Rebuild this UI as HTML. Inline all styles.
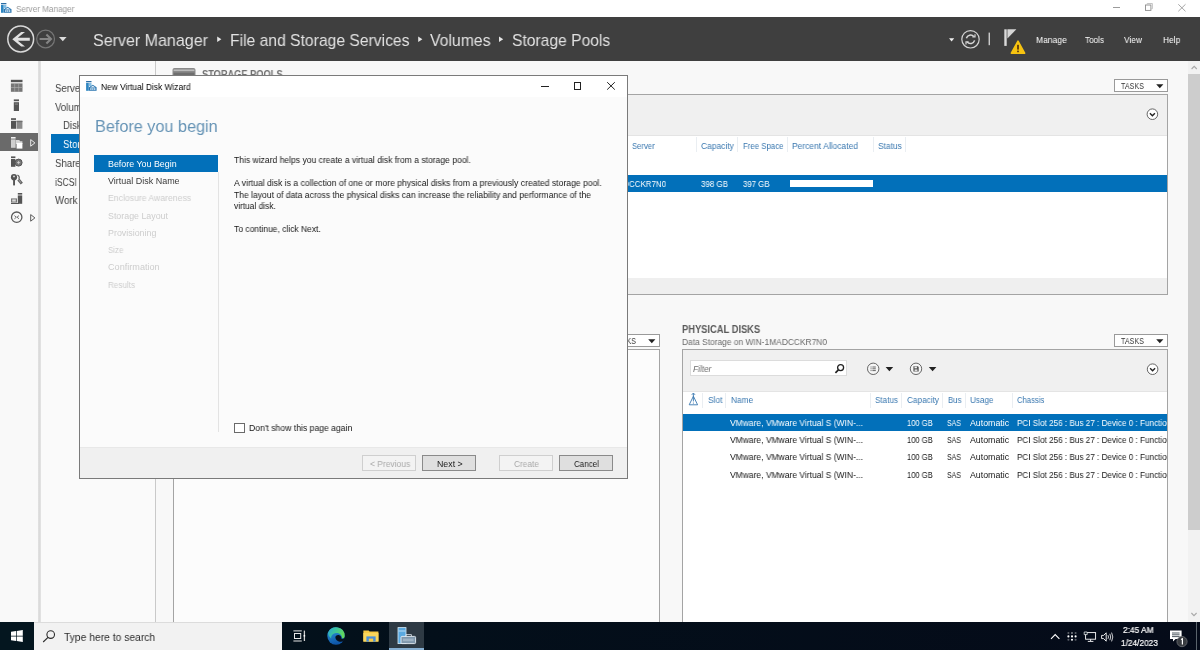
<!DOCTYPE html>
<html><head><meta charset="utf-8"><title>Server Manager</title>
<style>
html,body{margin:0;padding:0}
body{width:1200px;height:650px;position:relative;overflow:hidden;background:#fff;font-family:"Liberation Sans",sans-serif}
.a{position:absolute}
.t{position:absolute;white-space:pre;transform-origin:0 50%;will-change:transform}
svg{position:absolute;overflow:visible}
.tile{position:absolute;border:1px solid #a4a4a4;box-sizing:border-box;background:#fff}
.btn{position:absolute;box-sizing:border-box;border:1px solid #8a8a8a;background:#dfdfdf}
.btn.dis{border-color:#cfcfcf;background:#f3f3f3}
.tasks{position:absolute;box-sizing:border-box;border:1px solid #9a9a9a;background:#fff}
.sep{position:absolute;width:1px;background:#eaeef2}
</style></head><body>

<!-- ===== window title bar ===== -->
<div class="a" style="left:0;top:0;width:1200px;height:17px;background:#fff"></div>
<svg style="left:1.2px;top:3.1px" width="10.6" height="9.9" viewBox="0 0 10.6 9.9">
 <rect x="0" y="0" width="5.4" height="1.25" fill="#2d6ea5"/>
 <rect x="0" y="1.9" width="2.7" height="7.9" fill="#2e86c1"/>
 <rect x="2.7" y="1.9" width="2.7" height="3.2" fill="#86bfe3"/>
 <path d="M2.9 9.8V6.3L6.7 3.7L10.5 6.3V9.8Z" fill="#2b76b1"/>
 <path d="M4 6.6L6.7 4.8L9.4 6.6Z" fill="#e8f2fa"/>
 <rect x="4.1" y="7.2" width="5.2" height="1.7" fill="#cfe3f2"/>
 <rect x="5.2" y="7.5" width="1" height="1.1" fill="#2b76b1"/><rect x="7" y="7.5" width="1" height="1.1" fill="#2b76b1"/>
</svg>
<!-- window controls (inactive grey) -->
<div class="a" style="left:1113px;top:7px;width:7px;height:1px;background:#9b9b9b"></div>
<svg style="left:1144.6px;top:3.4px" width="8" height="8" viewBox="0 0 8 8" fill="none" stroke-width="0.9">
 <rect x="0.5" y="2" width="5.4" height="5.4" stroke="#8c8c8c"/><path d="M2.2 1.6V0.5H7.4V5.7H6.3" stroke="#bdbdbd"/>
</svg>
<svg style="left:1178px;top:4px" width="8" height="8" viewBox="0 0 8 8" stroke="#9b9b9b" stroke-width="0.9"><path d="M0.3 0.3L7.5 7.3M7.5 0.3L0.3 7.3"/></svg>

<!-- ===== dark header ===== -->
<div class="a" style="left:0;top:17px;width:1200px;height:44px;background:#3f3f3f"></div>
<!-- back / forward -->
<svg style="left:6px;top:24px" width="64" height="30" viewBox="0 0 64 30" fill="none">
 <circle cx="14.7" cy="15" r="12.9" stroke="#d9d9d9" stroke-width="1.5"/>
 <path d="M6.3 15.2L15.2 8H19L11.8 13.7H23.8V16.7H11.8L19 22.4H15.2Z" fill="#e0e0e0"/>
 <circle cx="39.6" cy="15" r="8.9" stroke="#767676" stroke-width="1.2"/>
 <path d="M33.6 15H45M40.4 10.4L45 15L40.4 19.6" stroke="#858585" stroke-width="2.1"/>
 <path d="M53 13H60.6L56.8 17.2Z" fill="#dcdcdc"/>
</svg>
<!-- breadcrumb arrows -->
<svg style="left:0;top:17px" width="620" height="44" fill="#e6e6e6">
 <path d="M217.2 19.6L221.4 22.3L217.2 25Z"/><path d="M418.2 19.6L422.4 22.3L418.2 25Z"/><path d="M499 19.6L503.2 22.3L499 25Z"/>
</svg>
<!-- right header controls -->
<svg style="left:940px;top:17px" width="100" height="44" viewBox="0 0 100 44" fill="none">
 <path d="M9 21.2H14.2L11.6 24.4Z" fill="#f0f0f0"/>
 <circle cx="30.5" cy="22.3" r="8.7" stroke="#d4d4d4" stroke-width="1.2"/>
 <path d="M26.4 21.2a4.3 4.3 0 0 1 7.4-1.6M34.6 23.4a4.3 4.3 0 0 1-7.4 1.6" stroke="#d8d8d8" stroke-width="1.5"/>
 <path d="M32.4 19.8h2.6v-2.6M28.6 24.8h-2.6v2.6" stroke="#d8d8d8" stroke-width="1.2"/>
 <rect x="48.6" y="15.6" width="1.3" height="12.6" fill="#d9d9d9"/>
 <rect x="64.3" y="12.3" width="2.4" height="16.6" fill="#dadada"/>
 <path d="M67.4 12.3H76.4L67.4 21.4Z" fill="#d6d6d6"/>
 <path d="M78 24.2L84.6 36.2H71.4Z" fill="#f6c311" stroke="#f6c311" stroke-width="1.6" stroke-linejoin="round"/>
 <rect x="77.1" y="27.8" width="1.8" height="4.8" fill="#5e3a0e"/><rect x="77.1" y="33.6" width="1.8" height="1.6" fill="#5e3a0e"/>
</svg>

<!-- ===== main area backgrounds ===== -->
<div class="a" style="left:0;top:61px;width:38px;height:561px;background:#f9f9f9"></div>
<div class="a" style="left:38px;top:61px;width:3px;height:561px;background:linear-gradient(90deg,#e2e2e2,#dbdbdb 50%,#e4e4e4)"></div>
<div class="a" style="left:41px;top:61px;width:114px;height:561px;background:#fafafa"></div>
<div class="a" style="left:155px;top:61px;width:1px;height:561px;background:#c9c9c9"></div>
<div class="a" style="left:156px;top:61px;width:1032px;height:561px;background:#f8f8f8"></div>
<!-- page scrollbar -->
<div class="a" style="left:1188px;top:61px;width:12px;height:561px;background:#f2f2f2"></div>
<div class="a" style="left:1188px;top:74px;width:12px;height:456px;background:#cdcdcd"></div>
<svg style="left:1188px;top:61px" width="12" height="561" fill="none" stroke="#a8a8a8" stroke-width="1.1"><path d="M3.6 8L6.2 5.4L8.8 8"/><path d="M3.4 552L6 554.6L8.6 552"/></svg>

<!-- left icon column -->
<div class="a" style="left:0;top:133px;width:38px;height:18px;background:#6a6a6a"></div>
<svg style="left:0;top:61px" width="40" height="170" viewBox="0 0 40 170">
 <!-- dashboard -->
 <rect x="10.9" y="18.8" width="11.6" height="2.4" fill="#555"/>
 <rect x="10.9" y="22.4" width="11.6" height="8.4" fill="#767676"/>
 <path d="M14.7 22.4v8.4M18.7 22.4v8.4M10.9 26.5h11.6" stroke="#b4b4b4" stroke-width=".6" fill="none"/>
 <!-- local server -->
 <g fill="#555"><rect x="13.8" y="38.4" width="5.2" height="1.8"/><rect x="13.8" y="41.2" width="5.2" height="8.8"/></g>
 <rect x="14.8" y="42.6" width="3.2" height="1" fill="#8a8a8a"/>
 <!-- all servers -->
 <g fill="#555"><rect x="11" y="57.2" width="5" height="1.7"/><rect x="11" y="59.8" width="5" height="8"/></g>
 <rect x="16.5" y="59.8" width="5.9" height="8" fill="#8b8b8b"/><rect x="16.5" y="59.8" width="5.9" height="1.3" fill="#707070"/>
 <!-- file & storage (selected, white) -->
 <g fill="#efefef"><rect x="11" y="76" width="4.6" height="1.6"/><rect x="11" y="78.4" width="4.6" height="8.4" fill="#cfcfcf"/>
 <path d="M15.8 79H19.2L20.2 80.2H22.4V83H15.8Z" fill="#d6d6d6"/><rect x="16.6" y="82" width="5.8" height="5.6" fill="#fff"/></g>
 <path d="M30.7 78.6L34.9 81.9L30.7 85.2Z" fill="none" stroke="#e9e9e9" stroke-width="1"/>
 <!-- icon 5 -->
 <g fill="#555"><rect x="11" y="95.4" width="4.4" height="1.7"/><rect x="11" y="98" width="4.4" height="7.8"/></g>
 <circle cx="18.6" cy="101.6" r="3.5" fill="#777" stroke="#555" stroke-width="1"/><path d="M17 101.6h3.2M18.6 100v3.2" stroke="#ddd" stroke-width=".7"/>
 <!-- icon 6 key/tools -->
 <circle cx="14" cy="116.2" r="3.1" fill="#555"/><circle cx="14" cy="115.4" r=".9" fill="#e8e8e8"/><rect x="13.1" y="118.6" width="1.9" height="5.8" fill="#555"/>
 <path d="M17.4 114.2c1.8.6 2.2 2.4 1.6 3.8l3 3.6-1.2 1-3-3.6" fill="none" stroke="#666" stroke-width="1.3"/>
 <!-- icon 7 -->
 <g fill="#555"><rect x="17.8" y="132" width="4.4" height="1.6"/><rect x="17.8" y="134.4" width="4.4" height="8.4"/><rect x="11" y="137.4" width="6" height="4.2" fill="#777"/><rect x="11" y="142" width="8" height="1"/></g>
 <rect x="12.2" y="138.4" width="3.6" height="2.2" fill="#d8d8d8"/>
 <!-- icon 8 -->
 <circle cx="16.7" cy="156.2" r="5.2" fill="none" stroke="#5a5a5a" stroke-width="1.3"/>
 <path d="M14.4 154.6l2 1.6-2 1.6M19 154.6l-2 1.6 2 1.6" fill="none" stroke="#666" stroke-width=".9"/>
 <path d="M30.7 153.6L34.9 156.9L30.7 160.2Z" fill="none" stroke="#5a5a5a" stroke-width="1"/>
</svg>
<!-- nav selected -->
<div class="a" style="left:51px;top:134px;width:104px;height:18.5px;background:#0270ba"></div>

<!-- storage pools heading icon -->
<svg style="left:172px;top:67px" width="24" height="10" viewBox="0 0 24 10"><rect x="0.5" y="1" width="23" height="9" rx="2" fill="#8a8a8a"/><rect x="1.6" y="2.6" width="20.8" height="1.2" fill="#c8c8c8"/><rect x="1.6" y="5.6" width="20.8" height="3" fill="#6e6e6e"/></svg>

<!-- ===== storage pools tile ===== -->
<div class="tile" style="left:173px;top:94px;width:995px;height:201px"></div>
<div class="a" style="left:174px;top:95px;width:993px;height:41px;background:#f0f0f0;border-bottom:1px solid #e4e4e4;box-sizing:border-box"></div>
<div class="a" style="left:174px;top:278px;width:993px;height:16px;background:#efefef"></div>
<div class="sep" style="left:696px;top:137px;height:15px"></div><div class="sep" style="left:737px;top:137px;height:15px"></div>
<div class="sep" style="left:787px;top:137px;height:15px"></div><div class="sep" style="left:873px;top:137px;height:15px"></div><div class="sep" style="left:905px;top:137px;height:15px"></div>
<div class="a" style="left:174px;top:175px;width:993px;height:17px;background:#0270ba"></div>
<div class="a" style="left:790px;top:180px;width:83px;height:7px;background:#fff"></div>
<div class="tasks" style="left:1114px;top:79px;width:54px;height:13px"></div>
<svg style="left:1156px;top:84px" width="8" height="5"><path d="M0.2 0.3H7.4L3.8 4.3Z" fill="#222"/></svg>
<svg style="left:1146px;top:108px" width="13" height="13" viewBox="0 0 13 13" fill="none"><circle cx="6.4" cy="6.2" r="5.3" fill="#fff" stroke="#555" stroke-width="0.9"/><path d="M3.9 5.2L6.4 7.7L8.9 5.2" stroke="#222" stroke-width="1.4"/></svg>

<!-- ===== virtual disks tile (mostly hidden) ===== -->
<div class="tile" style="left:173px;top:349px;width:487px;height:290px;background:#fcfcfc"></div>
<div class="tasks" style="left:606px;top:334px;width:54px;height:13px"></div>
<svg style="left:647.5px;top:339px" width="8" height="5"><path d="M0.2 0.3H7.4L3.8 4.3Z" fill="#222"/></svg>

<!-- ===== physical disks tile ===== -->
<div class="tile" style="left:682px;top:349px;width:486px;height:290px"></div>
<div class="a" style="left:683px;top:350px;width:484px;height:42px;background:#f0f0f0;border-bottom:1px solid #e4e4e4;box-sizing:border-box"></div>
<div class="tasks" style="left:1114px;top:334px;width:54px;height:13px"></div>
<svg style="left:1156px;top:339px" width="8" height="5"><path d="M0.2 0.3H7.4L3.8 4.3Z" fill="#222"/></svg>
<div class="a" style="left:689.5px;top:359.8px;width:157.5px;height:16.5px;background:#fff;border:1px solid #dcdcdc;box-sizing:border-box"></div>
<svg style="left:834px;top:363px" width="12" height="12" viewBox="0 0 12 12" fill="none" stroke="#222"><circle cx="6.6" cy="4.6" r="3" stroke-width="1.3"/><path d="M4.4 6.8L1.4 9.8" stroke-width="1.7"/></svg>
<svg style="left:866px;top:362px" width="74" height="14" viewBox="0 0 74 14" fill="none">
 <circle cx="7.2" cy="6.8" r="5.7" stroke="#555" stroke-width="0.9" fill="#f6f6f6"/>
 <path d="M4.6 5h.9M4.6 6.8h.9M4.6 8.6h.9" stroke="#444" stroke-width="0.9"/><path d="M6.4 5h3.4M6.4 6.8h3.4M6.4 8.6h3.4" stroke="#555" stroke-width="0.9"/>
 <path d="M19.6 5H27.2L23.4 9.2Z" fill="#222"/>
 <circle cx="50" cy="6.8" r="5.7" stroke="#555" stroke-width="0.9" fill="#f6f6f6"/>
 <path d="M47.4 4.2h4.4l.9.9v4.4h-5.3z" fill="#555"/><rect x="48.5" y="4.6" width="2.4" height="1.7" fill="#f2f2f2"/><rect x="48.6" y="7.4" width="2.8" height="1.8" fill="#e0e0e0"/>
 <path d="M62.8 5H70.4L66.6 9.2Z" fill="#222"/>
</svg>
<svg style="left:1146px;top:362.6px" width="13" height="13" viewBox="0 0 13 13" fill="none"><circle cx="6.6" cy="6.2" r="5.3" fill="#fff" stroke="#555" stroke-width="0.9"/><path d="M4.1 5.2L6.6 7.7L9.1 5.2" stroke="#222" stroke-width="1.4"/></svg>
<!-- column headers -->
<svg style="left:688px;top:392px" width="11" height="14" viewBox="0 0 11 14" fill="none" stroke="#3a78b0" stroke-width="0.9"><path d="M5.4 4.2L9.6 12.8H1.2Z"/><path d="M5.4 1.4V9.4M5.4 10.6v1" /><path d="M3.8 2.8L5.4 1L7 2.8" /></svg>
<div class="sep" style="left:702px;top:393px;height:15px"></div><div class="sep" style="left:725px;top:393px;height:15px"></div>
<div class="sep" style="left:870px;top:393px;height:15px"></div><div class="sep" style="left:901px;top:393px;height:15px"></div>
<div class="sep" style="left:942px;top:393px;height:15px"></div><div class="sep" style="left:965px;top:393px;height:15px"></div><div class="sep" style="left:1012px;top:393px;height:15px"></div>
<div class="a" style="left:683px;top:414px;width:484px;height:17px;background:#0270ba"></div>

<!-- background texts (clipped to content area so they don't overrun tiles) -->
<span class="t" style="left:16.30px;top:4.02px;font-size:8.6px;line-height:11px;color:#9a9a9a;transform:scaleX(0.9460);">Server Manager</span>
<span class="t" style="left:93.00px;top:29.62px;font-size:16.4px;line-height:21px;color:#e2e2e2;transform:scaleX(0.9785);">Server Manager</span>
<span class="t" style="left:230.00px;top:29.62px;font-size:16.4px;line-height:21px;color:#e2e2e2;transform:scaleX(0.9564);">File and Storage Services</span>
<span class="t" style="left:430.00px;top:29.62px;font-size:16.4px;line-height:21px;color:#e2e2e2;transform:scaleX(0.9622);">Volumes</span>
<span class="t" style="left:511.80px;top:29.62px;font-size:16.4px;line-height:21px;color:#e2e2e2;transform:scaleX(0.9537);">Storage Pools</span>
<span class="t" style="left:1035.80px;top:33.30px;font-size:9.8px;line-height:13px;color:#ffffff;transform:scaleX(0.8699);">Manage</span>
<span class="t" style="left:1085.30px;top:33.30px;font-size:9.8px;line-height:13px;color:#ffffff;transform:scaleX(0.8350);">Tools</span>
<span class="t" style="left:1124.00px;top:33.30px;font-size:9.8px;line-height:13px;color:#ffffff;transform:scaleX(0.8546);">View</span>
<span class="t" style="left:1162.50px;top:33.30px;font-size:9.8px;line-height:13px;color:#ffffff;transform:scaleX(0.8583);">Help</span>
<span class="t" style="left:54.50px;top:80.96px;font-size:10.8px;line-height:14px;color:#404040;transform:scaleX(0.8900);">Servers</span>
<span class="t" style="left:54.50px;top:99.86px;font-size:10.8px;line-height:14px;color:#404040;transform:scaleX(0.8900);">Volumes</span>
<span class="t" style="left:63.40px;top:118.36px;font-size:10.8px;line-height:14px;color:#404040;transform:scaleX(0.8900);">Disks</span>
<span class="t" style="left:63.10px;top:137.26px;font-size:10.8px;line-height:14px;color:#ffffff;transform:scaleX(0.8900);">Storage Pools</span>
<span class="t" style="left:54.50px;top:156.16px;font-size:10.8px;line-height:14px;color:#404040;transform:scaleX(0.8900);">Shares</span>
<span class="t" style="left:54.50px;top:174.86px;font-size:10.8px;line-height:14px;color:#404040;transform:scaleX(0.7896);">iSCSI</span>
<span class="t" style="left:54.50px;top:193.36px;font-size:10.8px;line-height:14px;color:#404040;transform:scaleX(0.9000);">Work Folders</span>
<span class="t" style="left:201.50px;top:68.23px;font-size:10px;line-height:13px;color:#707070;transform:scaleX(0.9246);font-weight:bold;">STORAGE POOLS</span>
<span class="t" style="left:631.80px;top:140.85px;font-size:8.8px;line-height:11px;color:#3a78b0;transform:scaleX(0.8757);">Server</span>
<span class="t" style="left:701.00px;top:140.85px;font-size:8.8px;line-height:11px;color:#3a78b0;transform:scaleX(0.9581);">Capacity</span>
<span class="t" style="left:742.50px;top:140.85px;font-size:8.8px;line-height:11px;color:#3a78b0;transform:scaleX(0.8904);">Free Space</span>
<span class="t" style="left:792.00px;top:140.85px;font-size:8.8px;line-height:11px;color:#3a78b0;transform:scaleX(0.9639);">Percent Allocated</span>
<span class="t" style="left:878.00px;top:140.85px;font-size:8.8px;line-height:11px;color:#3a78b0;transform:scaleX(0.9538);">Status</span>
<span class="t" style="left:589.00px;top:179.25px;font-size:8.8px;line-height:11px;color:#ffffff;transform:scaleX(0.9001);">WIN-1MADCCKR7N0</span>
<span class="t" style="left:701.00px;top:179.25px;font-size:8.8px;line-height:11px;color:#ffffff;transform:scaleX(0.9047);">398 GB</span>
<span class="t" style="left:742.50px;top:179.25px;font-size:8.8px;line-height:11px;color:#ffffff;transform:scaleX(0.8880);">397 GB</span>
<span class="t" style="left:1121.00px;top:80.75px;font-size:8.8px;line-height:11px;color:#333333;transform:scaleX(0.8155);">TASKS</span>
<span class="t" style="left:681.80px;top:322.64px;font-size:10px;line-height:13px;color:#5a5a5a;transform:scaleX(0.9339);font-weight:bold;">PHYSICAL DISKS</span>
<span class="t" style="left:682.00px;top:336.55px;font-size:8.8px;line-height:11px;color:#6a6a6a;transform:scaleX(0.9537);">Data Storage on WIN-1MADCCKR7N0</span>
<span class="t" style="left:1121.00px;top:335.75px;font-size:8.8px;line-height:11px;color:#333333;transform:scaleX(0.8155);">TASKS</span>
<span class="t" style="left:613.00px;top:335.75px;font-size:8.8px;line-height:11px;color:#333333;transform:scaleX(0.8155);">TASKS</span>
<span class="t" style="left:692.50px;top:363.85px;font-size:8.8px;line-height:11px;color:#6e6e6e;transform:scaleX(0.9457);font-style:italic;">Filter</span>
<span class="t" style="left:707.50px;top:394.55px;font-size:8.8px;line-height:11px;color:#3a78b0;transform:scaleX(0.9557);">Slot</span>
<span class="t" style="left:730.80px;top:394.55px;font-size:8.8px;line-height:11px;color:#3a78b0;transform:scaleX(0.9459);">Name</span>
<span class="t" style="left:875.00px;top:394.55px;font-size:8.8px;line-height:11px;color:#3a78b0;transform:scaleX(0.9217);">Status</span>
<span class="t" style="left:906.80px;top:394.55px;font-size:8.8px;line-height:11px;color:#3a78b0;transform:scaleX(0.9347);">Capacity</span>
<span class="t" style="left:947.50px;top:394.55px;font-size:8.8px;line-height:11px;color:#3a78b0;transform:scaleX(0.8898);">Bus</span>
<span class="t" style="left:970.00px;top:394.55px;font-size:8.8px;line-height:11px;color:#3a78b0;transform:scaleX(0.9238);">Usage</span>
<span class="t" style="left:1016.80px;top:394.55px;font-size:8.8px;line-height:11px;color:#3a78b0;transform:scaleX(0.8691);">Chassis</span>
<span class="t" style="left:730.00px;top:418.35px;font-size:8.8px;line-height:11px;color:#ffffff;transform:scaleX(0.9660);">VMware, VMware Virtual S (WIN-...</span>
<span class="t" style="left:906.80px;top:418.35px;font-size:8.8px;line-height:11px;color:#ffffff;transform:scaleX(0.8612);">100 GB</span>
<span class="t" style="left:947.00px;top:418.35px;font-size:8.8px;line-height:11px;color:#ffffff;transform:scaleX(0.7950);">SAS</span>
<span class="t" style="left:969.50px;top:418.35px;font-size:8.8px;line-height:11px;color:#ffffff;transform:scaleX(0.9968);">Automatic</span>
<span class="t" style="left:730.00px;top:434.65px;font-size:8.8px;line-height:11px;color:#151515;transform:scaleX(0.9660);">VMware, VMware Virtual S (WIN-...</span>
<span class="t" style="left:906.80px;top:434.65px;font-size:8.8px;line-height:11px;color:#151515;transform:scaleX(0.8612);">100 GB</span>
<span class="t" style="left:947.00px;top:434.65px;font-size:8.8px;line-height:11px;color:#151515;transform:scaleX(0.7950);">SAS</span>
<span class="t" style="left:969.50px;top:434.65px;font-size:8.8px;line-height:11px;color:#151515;transform:scaleX(0.9968);">Automatic</span>
<span class="t" style="left:730.00px;top:451.95px;font-size:8.8px;line-height:11px;color:#151515;transform:scaleX(0.9660);">VMware, VMware Virtual S (WIN-...</span>
<span class="t" style="left:906.80px;top:451.95px;font-size:8.8px;line-height:11px;color:#151515;transform:scaleX(0.8612);">100 GB</span>
<span class="t" style="left:947.00px;top:451.95px;font-size:8.8px;line-height:11px;color:#151515;transform:scaleX(0.7950);">SAS</span>
<span class="t" style="left:969.50px;top:451.95px;font-size:8.8px;line-height:11px;color:#151515;transform:scaleX(0.9968);">Automatic</span>
<span class="t" style="left:730.00px;top:470.25px;font-size:8.8px;line-height:11px;color:#151515;transform:scaleX(0.9660);">VMware, VMware Virtual S (WIN-...</span>
<span class="t" style="left:906.80px;top:470.25px;font-size:8.8px;line-height:11px;color:#151515;transform:scaleX(0.8612);">100 GB</span>
<span class="t" style="left:947.00px;top:470.25px;font-size:8.8px;line-height:11px;color:#151515;transform:scaleX(0.7950);">SAS</span>
<span class="t" style="left:969.50px;top:470.25px;font-size:8.8px;line-height:11px;color:#151515;transform:scaleX(0.9968);">Automatic</span>

<div class="a" style="left:0;top:0;width:1167px;height:622px;overflow:hidden">
<span class="t" style="left:1016.50px;top:418.35px;font-size:8.8px;line-height:11px;color:#ffffff;transform:scaleX(0.9249);">PCI Slot 256 : Bus 27 : Device 0 : Function 0</span>
<span class="t" style="left:1016.50px;top:434.65px;font-size:8.8px;line-height:11px;color:#151515;transform:scaleX(0.9249);">PCI Slot 256 : Bus 27 : Device 0 : Function 0</span>
<span class="t" style="left:1016.50px;top:451.95px;font-size:8.8px;line-height:11px;color:#151515;transform:scaleX(0.9249);">PCI Slot 256 : Bus 27 : Device 0 : Function 0</span>
<span class="t" style="left:1016.50px;top:470.25px;font-size:8.8px;line-height:11px;color:#151515;transform:scaleX(0.9249);">PCI Slot 256 : Bus 27 : Device 0 : Function 0</span>

</div>

<!-- ===== wizard dialog ===== -->
<div class="a" style="left:79px;top:75px;width:549px;height:404px;box-sizing:border-box;border:1px solid #7a7a7a;background:#fbfbfb"></div>
<div class="a" style="left:80px;top:76px;width:547px;height:21px;background:#fff"></div>
<div class="a" style="left:80px;top:447px;width:547px;height:31px;background:#f0f0f0;border-top:1px solid #e8e8e8;box-sizing:border-box"></div>
<svg style="left:86.3px;top:80.9px" width="10.8" height="9.9" viewBox="0 0 10.6 9.9">
 <rect x="0" y="0" width="5.4" height="1.25" fill="#2d6ea5"/>
 <rect x="0" y="1.9" width="2.7" height="7.9" fill="#2e86c1"/>
 <rect x="2.7" y="1.9" width="2.7" height="3.2" fill="#86bfe3"/>
 <path d="M2.9 9.8V6.3L6.7 3.7L10.5 6.3V9.8Z" fill="#2b76b1"/>
 <path d="M4 6.6L6.7 4.8L9.4 6.6Z" fill="#e8f2fa"/>
 <rect x="4.1" y="7.2" width="5.2" height="1.7" fill="#cfe3f2"/>
 <rect x="5.2" y="7.5" width="1" height="1.1" fill="#2b76b1"/><rect x="7" y="7.5" width="1" height="1.1" fill="#2b76b1"/>
</svg>
<div class="a" style="left:541px;top:86px;width:8px;height:1px;background:#222"></div>
<div class="a" style="left:573.5px;top:82px;width:7.5px;height:7.5px;box-sizing:border-box;border:1px solid #222"></div>
<svg style="left:607px;top:82px" width="8" height="8" viewBox="0 0 8 8" stroke="#222" stroke-width="1"><path d="M0.2 0.2L7.8 7.6M7.8 0.2L0.2 7.6"/></svg>
<div class="a" style="left:94px;top:154.5px;width:124px;height:17.5px;background:#0270ba"></div>
<div class="a" style="left:218px;top:172px;width:1px;height:260px;background:#e3e3e3"></div>
<div class="a" style="left:234px;top:423px;width:10.5px;height:9.5px;box-sizing:border-box;border:1px solid #6a6a6a;background:#fff"></div>
<div class="btn dis" style="left:362px;top:455px;width:54px;height:16px"></div>
<div class="btn" style="left:422px;top:455px;width:54px;height:16px"></div>
<div class="btn dis" style="left:499px;top:455px;width:54px;height:16px"></div>
<div class="btn" style="left:559px;top:455px;width:54px;height:16px"></div>
<span class="t" style="left:101.40px;top:82.05px;font-size:8.8px;line-height:11px;color:#000000;transform:scaleX(0.9513);">New Virtual Disk Wizard</span>
<span class="t" style="left:95.00px;top:115.88px;font-size:16.8px;line-height:22px;color:#6593b5;transform:scaleX(0.9670);">Before you begin</span>
<span class="t" style="left:107.60px;top:159.25px;font-size:8.8px;line-height:11px;color:#ffffff;transform:scaleX(1.0088);">Before You Begin</span>
<span class="t" style="left:107.60px;top:175.65px;font-size:8.8px;line-height:11px;color:#3a3a3a;transform:scaleX(1.0194);">Virtual Disk Name</span>
<span class="t" style="left:107.60px;top:192.75px;font-size:8.8px;line-height:11px;color:#cdcdcd;transform:scaleX(0.9842);">Enclosure Awareness</span>
<span class="t" style="left:107.60px;top:211.05px;font-size:8.8px;line-height:11px;color:#cdcdcd;transform:scaleX(1.0055);">Storage Layout</span>
<span class="t" style="left:107.60px;top:228.35px;font-size:8.8px;line-height:11px;color:#cdcdcd;transform:scaleX(1.0100);">Provisioning</span>
<span class="t" style="left:107.60px;top:244.65px;font-size:8.8px;line-height:11px;color:#cdcdcd;transform:scaleX(0.8993);">Size</span>
<span class="t" style="left:107.60px;top:261.95px;font-size:8.8px;line-height:11px;color:#cdcdcd;transform:scaleX(1.0366);">Confirmation</span>
<span class="t" style="left:107.60px;top:280.25px;font-size:8.8px;line-height:11px;color:#cdcdcd;transform:scaleX(0.9201);">Results</span>
<span class="t" style="left:234.00px;top:155.45px;font-size:8.8px;line-height:11px;color:#161616;transform:scaleX(0.9725);">This wizard helps you create a virtual disk from a storage pool.</span>
<span class="t" style="left:234.00px;top:177.75px;font-size:8.8px;line-height:11px;color:#161616;transform:scaleX(0.9792);">A virtual disk is a collection of one or more physical disks from a previously created storage pool.</span>
<span class="t" style="left:234.00px;top:190.25px;font-size:8.8px;line-height:11px;color:#161616;transform:scaleX(0.9721);">The layout of data across the physical disks can increase the reliability and performance of the</span>
<span class="t" style="left:234.00px;top:200.65px;font-size:8.8px;line-height:11px;color:#161616;transform:scaleX(0.9500);">virtual disk.</span>
<span class="t" style="left:234.00px;top:223.55px;font-size:8.8px;line-height:11px;color:#161616;transform:scaleX(0.9648);">To continue, click Next.</span>
<span class="t" style="left:248.70px;top:423.25px;font-size:8.8px;line-height:11px;color:#161616;transform:scaleX(0.9805);">Don't show this page again</span>
<span class="t" style="left:369.80px;top:459.05px;font-size:8.8px;line-height:11px;color:#a9a9a9;transform:scaleX(0.9614);">&lt; Previous</span>
<span class="t" style="left:436.50px;top:459.05px;font-size:8.8px;line-height:11px;color:#1a1a1a;transform:scaleX(0.9933);">Next &gt;</span>
<span class="t" style="left:513.60px;top:459.05px;font-size:8.8px;line-height:11px;color:#a9a9a9;transform:scaleX(0.9430);">Create</span>
<span class="t" style="left:573.50px;top:459.05px;font-size:8.8px;line-height:11px;color:#1a1a1a;transform:scaleX(0.9091);">Cancel</span>


<!-- ===== taskbar ===== -->
<div class="a" style="left:0;top:622px;width:1200px;height:28px;background:linear-gradient(90deg,#03151e 0%,#030f1a 35%,#050b19 100%)"></div>
<div class="a" style="left:0;top:622px;width:34px;height:28px;background:#04161f"></div>
<svg style="left:11px;top:630px" width="12" height="12" viewBox="0 0 12 12" fill="#fff"><path d="M0 1.7L5 1V5.7H0Z"/><path d="M5.7 0.9L11.8 0V5.7H5.7Z"/><path d="M0 6.4H5V11L0 10.3Z"/><path d="M5.7 6.4H11.8V12L5.7 11.1Z"/></svg>
<div class="a" style="left:34px;top:622px;width:248px;height:28px;background:#f2f2f2;border-top:1px solid #dcdcdc;box-sizing:border-box"></div>
<svg style="left:42px;top:629px" width="14" height="14" viewBox="0 0 14 14" fill="none" stroke="#2b2b2b" stroke-width="1.1"><circle cx="8.7" cy="5.6" r="3.8"/><path d="M6 8.4L1.2 13"/></svg>
<!-- task view -->
<svg style="left:293px;top:630px" width="13" height="12" viewBox="0 0 13 12" fill="none" stroke="#e6e6e6" stroke-width="1"><rect x="1.5" y="3.5" width="6.2" height="5"/><path d="M.4 .9h8.4M.4 11h8.4"/><path d="M11.4 .6v10.4" stroke="#cfcfcf" stroke-width="1.3"/><path d="M11.4 5v1.6" stroke="#fff" stroke-width="1.5"/></svg>
<!-- edge -->
<svg style="left:327px;top:627px" width="18" height="18" viewBox="0 0 18 18">
 <defs><linearGradient id="eb" x1="0" y1="0" x2="0.3" y2="1"><stop offset="0" stop-color="#2f9fe0"/><stop offset="1" stop-color="#0e56a8"/></linearGradient>
 <linearGradient id="eg" x1="0" y1="0" x2="1" y2="0.4"><stop offset="0" stop-color="#2aa6d8"/><stop offset=".5" stop-color="#3cc49a"/><stop offset="1" stop-color="#62d65c"/></linearGradient></defs>
 <circle cx="9" cy="9" r="8.7" fill="url(#eb)"/>
 <path d="M1.2 5.2A8.7 8.7 0 0 1 17.7 8.8C17.8 10.6 16.6 11.6 15 11.4C15.4 8.4 12.6 5.6 9 6C5.6 6.4 3.8 9 4.2 11.6C2 9.6 .8 7.4 1.2 5.2Z" fill="url(#eg)"/>
 <path d="M8.4 10.6C8.2 8.6 10.4 7.6 12.2 8.2C14 8.8 14.6 10.4 14.2 11.4C15.4 12 17 11.6 17.7 10.4C17.6 12.2 16.8 13.6 15.6 14.6C13.6 15 11.4 14.6 10 13.4C9 12.6 8.5 11.6 8.4 10.6Z" fill="#06101c"/>
</svg>
<!-- explorer -->
<svg style="left:363.4px;top:630.2px" width="16" height="12" viewBox="0 0 17 12" preserveAspectRatio="none"><path d="M0.4 0.4H6L7 1.6H16.4V11.6H0.4Z" fill="#f7c944"/><rect x="0.4" y="3" width="16" height="8.6" fill="#f9d65c"/><rect x="3.6" y="6.4" width="9.8" height="5.2" fill="#4a90d9"/><rect x="6.2" y="8.6" width="4.6" height="3" fill="#f7c944"/></svg>
<!-- server manager (active) -->
<div class="a" style="left:389px;top:622px;width:35px;height:28px;background:#2e3a44"></div>
<div class="a" style="left:389px;top:648.4px;width:35px;height:1.6px;background:#86afd2"></div>
<svg style="left:397px;top:627px" width="20" height="18" viewBox="0 0 20 18"><rect x="1" y=".6" width="8" height="16" fill="#5aa9e0" stroke="#d8ecf8" stroke-width=".8"/><rect x="1.6" y="3.6" width="6.8" height=".8" fill="#d8ecf8"/><rect x="4" y="9.4" width="14.6" height="7.2" rx="1" fill="#7f97ac" stroke="#e6eef5" stroke-width=".9"/><rect x="6" y="11.6" width="10.6" height="2.6" fill="#9fb3c4"/><path d="M9 9.2V7.6h5.4v1.6" fill="none" stroke="#e6eef5" stroke-width=".8"/></svg>
<!-- tray -->
<svg style="left:1050px;top:628px" width="70" height="18" viewBox="0 0 70 18" fill="none">
 <path d="M1 10.8L5.2 6.6L9.4 10.8" stroke="#fff" stroke-width="1.1"/>
 <g fill="#fff"><circle cx="18.4" cy="8.4" r="1.05"/><circle cx="22" cy="8.4" r="1.05"/><circle cx="25.6" cy="8.4" r="1.05"/><circle cx="22" cy="11.8" r="1.05"/><circle cx="22" cy="5" r="1.05" opacity=".45"/><circle cx="18.4" cy="5" r="1.05" opacity=".35"/><circle cx="25.6" cy="5" r="1.05" opacity=".35"/><circle cx="18.4" cy="11.8" r="1.05" opacity=".35"/><circle cx="25.6" cy="11.8" r="1.05" opacity=".35"/></g>
 <rect x="35.6" y="4.6" width="10" height="6.6" stroke="#fff" stroke-width=".9"/><path d="M40.6 11.2v1.8M37.8 13.4h5.6" stroke="#fff" stroke-width=".9"/><path d="M34.2 4h3v2.6h-3z" fill="#03111c" stroke="#fff" stroke-width=".7"/>
 <path d="M51.6 7.4h2l2.6-2.6v8.4l-2.6-2.6h-2z" stroke="#fff" stroke-width=".9"/><path d="M58 7.2q1 1.8 0 3.6M59.8 5.8q1.8 3.2 0 6.4M61.6 4.6q2.4 4.4 0 8.8" stroke="#fff" stroke-width=".8"/>
</svg>
<svg style="left:1169px;top:630px" width="20" height="18" viewBox="0 0 20 18"><path d="M1 .6H12.6V9H6.6L4 11.4V9H1Z" fill="#fff"/><path d="M3 3h7.6M3 4.8h7.6M3 6.6h7.6" stroke="#03111c" stroke-width=".7"/><circle cx="13" cy="11.6" r="5.1" fill="#383b40" stroke="#6d7075" stroke-width=".8"/><path d="M12 9.6l1.4-.8v5.6" stroke="#fff" stroke-width="1.2" fill="none"/></svg>
<div class="a" style="left:1196px;top:622px;width:1px;height:28px;background:#5a636b"></div>
<span class="t" style="left:63.50px;top:630.19px;font-size:11px;line-height:14px;color:#2e2e2e;transform:scaleX(0.9379);">Type here to search</span>
<span class="t" style="left:1123.00px;top:625.25px;font-size:8.8px;line-height:11px;color:#ffffff;transform:scaleX(0.9479);-webkit-text-stroke:0.2px #fff;">2:45 AM</span>
<span class="t" style="left:1120.50px;top:638.25px;font-size:8.8px;line-height:11px;color:#ffffff;transform:scaleX(0.9428);-webkit-text-stroke:0.2px #fff;">1/24/2023</span>

</body></html>
